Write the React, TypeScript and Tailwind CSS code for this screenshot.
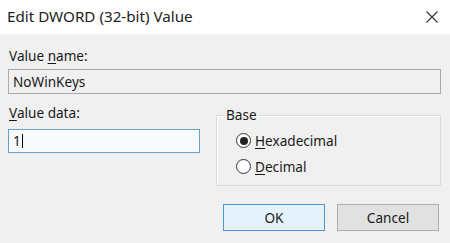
import React from "react";

export default function App() {
  const font = { fontFamily: '"Noto Sans", "Segoe UI", Arial, sans-serif' };
  return (
    <div className="w-[450px] h-[243px] bg-[#f0f0f0] flex flex-col text-[#1a1a1a]" style={font}>
      <div className="h-[34px] shrink-0 bg-white flex items-center justify-between pl-[7px] pr-[12px]">
        <span className="text-[15.2px] text-[#222] leading-none">Edit DWORD (32-bit) Value</span>
        <svg width="12" height="12" viewBox="0 0 12 12" className="mb-[1px]">
          <path d="M0.5 0.5 L11.5 11.5 M11.5 0.5 L0.5 11.5" stroke="#333" strokeWidth="1.1" fill="none" />
        </svg>
      </div>
      <div className="flex-1 flex flex-col pl-[8px] pr-[9px] pt-[13px] text-[13.6px]">
        <div className="leading-[18px] pl-[1px]">
          Value <span className="underline underline-offset-2">n</span>ame:
        </div>
        <div className="mt-[4px] h-[25px] border border-[#a9a9a9] bg-[#f0f0f0] flex items-center pl-[4px] leading-none">
          NoWinKeys
        </div>
        <div className="flex mt-[21px]">
          <div className="w-[192px] flex flex-col">
            <div className="leading-[18px] pl-[1px] -mt-[11px]">
              <span className="underline underline-offset-2">V</span>alue data:
            </div>
            <div className="mt-[7px] h-[24px] border border-[#6d9fc4] bg-[#f7fbfe] flex items-center pl-[4px] leading-none">
              <span>1</span>
              <span className="w-[1px] h-[14px] bg-black ml-[1px]"></span>
            </div>
          </div>
          <fieldset className="ml-[16px] flex-1 h-[78px] border border-[#dadada] shadow-[inset_1px_1px_0_#ffffff] px-[19px] -mt-[7px] rounded-[1px]">
            <legend className="px-[2px] ml-[-12px] leading-[14px]">Base</legend>
            <div className="flex flex-col gap-[11px] mt-[11px]">
              <label className="flex items-center gap-[4px] leading-none">
                <span className="w-[15px] h-[15px] rounded-full border border-[#333] bg-white flex items-center justify-center">
                  <span className="w-[8px] h-[8px] rounded-full bg-[#222]"></span>
                </span>
                <span>
                  <span className="underline underline-offset-2">H</span>exadecimal
                </span>
              </label>
              <label className="flex items-center gap-[4px] leading-none">
                <span className="w-[15px] h-[15px] rounded-full border border-[#333] bg-white"></span>
                <span>
                  <span className="underline underline-offset-2">D</span>ecimal
                </span>
              </label>
            </div>
          </fieldset>
        </div>
        <div className="flex justify-end gap-[12px] mt-[18px] pr-[2px]">
          <button className="w-[102px] h-[27px] border border-[#4a97d3] bg-[#e5f1fb] text-[13.6px] leading-none">OK</button>
          <button className="w-[102px] h-[27px] border border-[#adadad] bg-[#e1e1e1] text-[13.6px] leading-none">Cancel</button>
        </div>
      </div>
    </div>
  );
}
